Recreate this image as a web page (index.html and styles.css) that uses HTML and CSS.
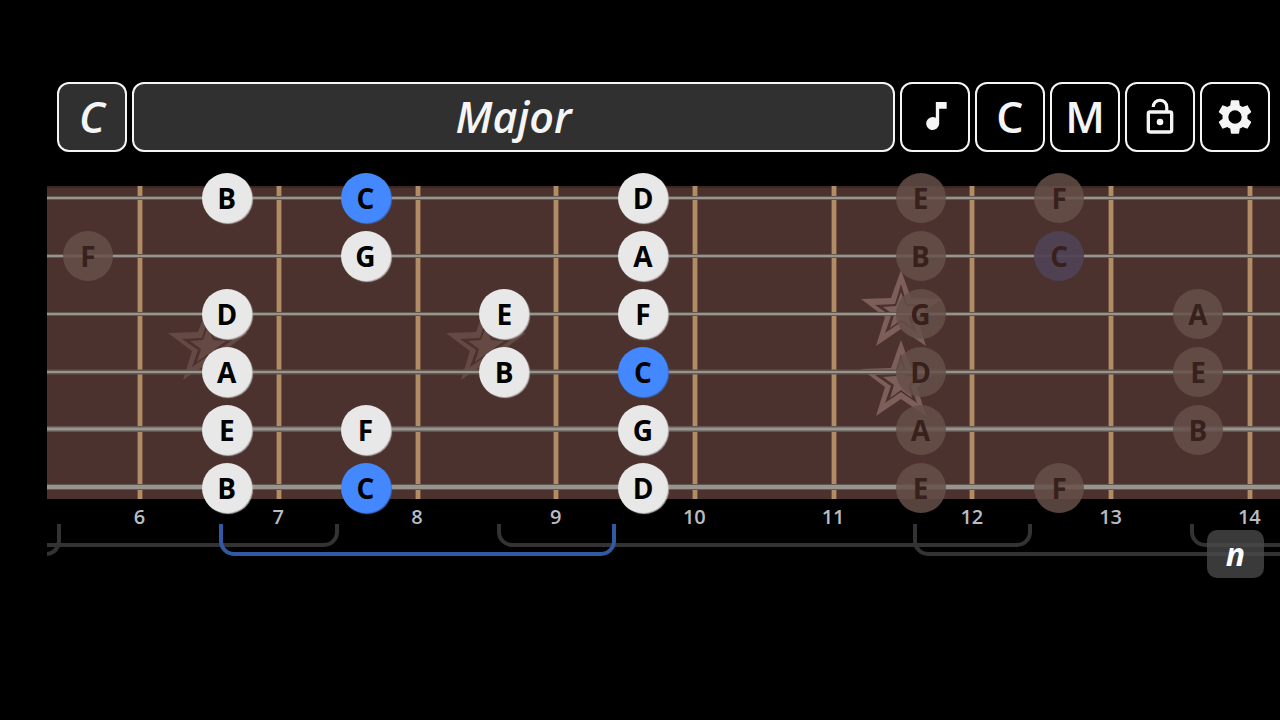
FILE: index.html
```
<!DOCTYPE html>
<html lang="en">
<head>
<meta charset="utf-8">
<title>Major scale</title>
<link rel="stylesheet" href="styles.css">
</head>
<body>
<main class="app">
  <header class="toolbar">
    <button class="tool filled slanted" type="button" aria-label="Root note">C</button>
    <button class="tool filled slanted wide" type="button" aria-label="Scale">Major</button>
    <button class="tool" type="button" aria-label="Sound"><svg class="icon" viewBox="0 0 24 24"><path d="M12.500 3v9.500a3.900 3.900 0 1 0 2 3.500V7H19V3z"/></svg></button>
    <button class="tool" type="button">C</button>
    <button class="tool" type="button">M</button>
    <button class="tool" type="button" aria-label="Unlock"><svg class="icon" viewBox="0 0 24 24"><path d="M12 17a2 2 0 1 0 0-4 2 2 0 0 0 0 4zm6-9h-1V6A5 5 0 0 0 7 6h1.900a3.100 3.100 0 0 1 6.200 0v2H6a2 2 0 0 0-2 2v10a2 2 0 0 0 2 2h12a2 2 0 0 0 2-2V10a2 2 0 0 0-2-2zm0 12H6V10h12z"/></svg></button>
    <button class="tool" type="button" aria-label="Settings"><svg class="icon" viewBox="0 0 24 24"><path d="M19.430 12.980c.04-.32.07-.64.07-.98s-.03-.66-.07-.98l2.110-1.650c.19-.15.24-.42.12-.64l-2-3.460c-.12-.22-.39-.3-.61-.22l-2.490 1c-.52-.4-1.080-.73-1.690-.98l-.38-2.650A.488.488 0 0 0 14 2h-4c-.25 0-.46.18-.49.42l-.38 2.650c-.61.25-1.170.59-1.690.98l-2.490-1c-.23-.09-.49 0-.61.22l-2 3.460c-.13.22-.07.49.12.64l2.110 1.650c-.04.32-.07.65-.07.98s.03.66.07.98l-2.110 1.650c-.19.15-.24.42-.12.64l2 3.460c.12.22.39.3.61.22l2.490-1c.52.4 1.080.73 1.690.98l.38 2.650c.03.24.24.42.49.42h4c.25 0 .46-.18.49-.42l.38-2.650c.61-.25 1.170-.59 1.690-.98l2.490 1c.23.09.49 0 .61-.22l2-3.460c.12-.22.07-.49-.12-.64zM12 16a4 4 0 1 1 0-8 4 4 0 0 1 0 8z"/></svg></button>
  </header>

  <section class="neck" aria-label="Fretboard">
    <div class="board">
      <svg class="wood" viewBox="0 0 1233 348" preserveAspectRatio="none" aria-hidden="true">
        <defs>
          <g id="fret"><rect x="-3" y="17" width="6" height="313" fill="#765642"/><rect x="-2" y="17" width="4" height="313" fill="#b18d66"/></g>
          <path id="star" fill-rule="evenodd" d="M0-42 10-14 40-13 16 5 25 34 0 17-25 34-16 5-40-13-10-14ZM0-28-6-8-26-7-10 4-16 21 0 10 16 21 10 4 26-7 6-8ZM0-20 5-6 18-5 7 3 11 16 0 8-11 16-7 3-18-5-5-6Z"/>
        </defs>
        <rect y="17" width="1233" height="313" fill="#4b322e"/>
        <rect y="17" width="1233" height="2" fill="#3c2724"/>
        <g>
          <use href="#fret" x="93"/><use href="#fret" x="232"/><use href="#fret" x="371"/>
          <use href="#fret" x="509"/><use href="#fret" x="648"/><use href="#fret" x="787"/>
          <use href="#fret" x="925"/><use href="#fret" x="1064"/><use href="#fret" x="1203"/>
        </g>
        <g fill="#c49c96">
          <use href="#star" x="161" y="177" opacity=".22"/><use href="#star" x="439" y="177" opacity=".22"/>
          <use href="#star" x="854" y="143" opacity=".42"/><use href="#star" x="854" y="213" opacity=".42"/>
        </g>
        <g stroke="#625850">
          <path stroke-width="4" d="M0 29h1233M0 87h1233M0 145h1233"/>
          <path stroke-width="5" d="M0 203h1233"/>
          <path stroke-width="6" d="M0 260h1233M0 318h1233"/>
        </g>
        <g stroke="#989590">
          <path stroke-width="2" d="M0 29h1233M0 87h1233M0 145h1233M0 203h1233"/>
          <path stroke-width="3" d="M0 260h1233"/>
          <path stroke-width="4" d="M0 318h1233"/>
        </g>
      </svg>
      <div class="notes">
        <span class="note r1 c2">B</span><span class="note root r1 c3">C</span><span class="note r1 c5">D</span><span class="note dim r1 c7">E</span><span class="note dim r1 c8">F</span>
        <span class="note dim r2 c1">F</span><span class="note r2 c3">G</span><span class="note r2 c5">A</span><span class="note dim r2 c7">B</span><span class="note dim root r2 c8">C</span>
        <span class="note r3 c2">D</span><span class="note r3 c4">E</span><span class="note r3 c5">F</span><span class="note dim r3 c7">G</span><span class="note dim r3 c9">A</span>
        <span class="note r4 c2">A</span><span class="note r4 c4">B</span><span class="note root r4 c5">C</span><span class="note dim r4 c7">D</span><span class="note dim r4 c9">E</span>
        <span class="note r5 c2">E</span><span class="note r5 c3">F</span><span class="note r5 c5">G</span><span class="note dim r5 c7">A</span><span class="note dim r5 c9">B</span>
        <span class="note r6 c2">B</span><span class="note root r6 c3">C</span><span class="note r6 c5">D</span><span class="note dim r6 c7">E</span><span class="note dim r6 c8">F</span>
      </div>
    </div>
    <div class="numbers">
      <span class="n6">6</span><span>7</span><span>8</span><span>9</span><span>10</span><span>11</span><span>12</span><span>13</span><span>14</span>
    </div>
    <div class="ranges">
      <svg class="brackets" viewBox="0 0 1233 34" preserveAspectRatio="none" aria-hidden="true">
        <g fill="none" stroke="#333" stroke-width="4">
          <path d="M12 0V17A13 13 0 0 1 0 30"/>
          <path d="M0 21H277A13 13 0 0 0 290 8V0"/>
          <path d="M452 0V8A13 13 0 0 0 465 21H970A13 13 0 0 0 983 8V0"/>
          <path d="M868 0V17A13 13 0 0 0 881 30H1233"/>
          <path d="M1145 0V8A13 13 0 0 0 1158 21H1233"/>
          <path stroke="#2f5ba5" d="M174 0V17A13 13 0 0 0 187 30H554A13 13 0 0 0 567 17V0"/>
        </g>
      </svg>
      <button class="mode" type="button">n</button>
    </div>
  </section>
</main>
</body>
</html>
```
FILE: styles.css
```
* { box-sizing: border-box; }

body {
  margin: 0;
  background: #000;
  font-family: "Open Sans", "Noto Sans", sans-serif;
  font-weight: 600;
}

.app { padding-top: 82px; overflow: hidden; }

.toolbar {
  display: flex;
  gap: 5px;
  padding: 0 10px 0 57px;
}

.tool {
  flex: none;
  display: flex;
  align-items: center;
  justify-content: center;
  width: 70px;
  height: 70px;
  padding: 0;
  border: 2px solid #f5f5f5;
  border-radius: 12px;
  background: #000;
  color: #f5f5f5;
  font: inherit;
  font-size: 43px;
  font-weight: 650;
  line-height: 60px;
}
.filled { background: #303030; }
.slanted { font-style: italic; }
.wide { flex: 1; }
.icon { width: 40px; height: 40px; fill: #f5f5f5; }

.neck { margin: 17px 0 0 47px; overflow: hidden; }

.board { display: grid; }
.wood, .notes { grid-area: 1 / 1; width: 100%; height: 348px; }

.notes {
  display: grid;
  grid-template-columns: 372fr repeat(8, 555fr) 120fr;
  grid-template-rows: repeat(6, 58px);
}

.note {
  justify-self: end;
  align-self: center;
  width: 50px;
  height: 50px;
  margin-right: 27px;
  border-radius: 50%;
  background: #e8e8e8;
  box-shadow: 1px 1px 1px #bdb9b6;
  color: #000;
  font-size: 28px;
  font-weight: 700;
  line-height: 50px;
  text-align: center;
}
.note.root { background: #4388ff; box-shadow: 1px 1px 1px #3a70cf; }
.note.dim {
  background: rgba(103, 80, 74, 0.84);
  box-shadow: none;
  color: #38201c;
}
.note.dim.root { background: rgba(80, 66, 84, 0.94); }

.r1 { grid-row: 1; } .r2 { grid-row: 2; } .r3 { grid-row: 3; }
.r4 { grid-row: 4; } .r5 { grid-row: 5; } .r6 { grid-row: 6; }
.c1 { grid-column: 1; } .c2 { grid-column: 2; } .c3 { grid-column: 3; }
.c4 { grid-column: 4; } .c5 { grid-column: 5; } .c7 { grid-column: 7; }
.c8 { grid-column: 8; } .c9 { grid-column: 9; }

/* Each number is centred on its fret wire, half a column off the notes. */
.numbers {
  display: grid;
  grid-template-columns: 92fr repeat(9, 555fr);
  width: calc(100% * 5087 / 4932);
  margin-top: -12px;
  color: #bcbcc0;
  font-size: 20px;
  line-height: 24px;
  text-align: center;
}
.n6 { grid-column: 2; }

.ranges { position: relative; height: 60px; margin-top: -5px; }
.brackets { display: block; width: 100%; height: 34px; }

.mode {
  position: absolute;
  top: 6px;
  right: 16px;
  width: 57px;
  height: 48px;
  padding: 0;
  border: 0;
  border-radius: 10px;
  background: rgba(72, 72, 72, 0.8);
  color: #fff;
  font: inherit;
  font-size: 32px;
  font-weight: 700;
  font-style: italic;
  line-height: 44px;
}
```
